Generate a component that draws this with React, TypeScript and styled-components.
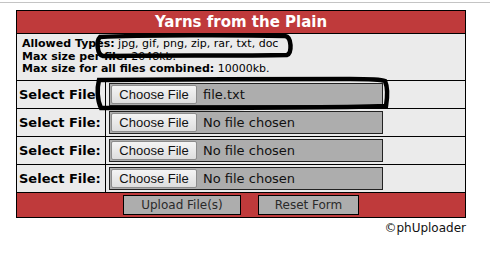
import styled, { createGlobalStyle } from 'styled-components';

const GlobalStyle = createGlobalStyle`
  body {
    margin: 0;
    background: #ffffff;
    font-family: "DejaVu Sans", Verdana, sans-serif;
  }
`;

const Page = styled.div`
  position: relative;
  width: 490px;
  height: 258px;
`;

const TopRule = styled.div`
  height: 2px;
  border-bottom: 1px solid #c4c4c4;
`;

const Frame = styled.div`
  margin: 7px 0 0 16px;
  width: 450px;
`;

const Panel = styled.div`
  box-sizing: border-box;
  width: 450px;
  border: 1px solid #000;
  background: #ebebeb;
`;

const Header = styled.div`
  height: 22px;
  background: #bf3a3b;
  border-bottom: 1px solid #000;
  color: #fff;
  font-weight: bold;
  font-size: 15px;
  line-height: 22px;
  text-align: center;
`;

const Info = styled.div`
  height: 47px;
  box-sizing: border-box;
  padding: 4px 5px 0;
  border-bottom: 1px solid #000;
  font-size: 11px;
  line-height: 12.5px;
  color: #000;
`;

const Row = styled.div`
  display: grid;
  grid-template-columns: 89px 1fr;
  height: 27px;
  border-bottom: 1px solid #000;
`;

const Label = styled.div`
  display: flex;
  align-items: center;
  padding-left: 2px;
  border-right: 1px solid #000;
  font-size: 13px;
  font-weight: bold;
  white-space: nowrap;
`;

const Cell = styled.div`
  display: flex;
  align-items: center;
  padding-left: 3px;
`;

const FileBox = styled.div`
  box-sizing: border-box;
  display: flex;
  align-items: center;
  width: 274px;
  height: 23px;
  border: 1px solid #222;
  background: #adadad;
`;

const ChooseButton = styled.span`
  box-sizing: border-box;
  display: flex;
  align-items: center;
  justify-content: center;
  width: 86px;
  height: 19px;
  margin-left: 1px;
  border: 1px solid #8c8c8c;
  border-radius: 2px;
  background: linear-gradient(#f4f4f4, #dedede);
  font-family: "Liberation Sans", Arial, sans-serif;
  font-size: 13px;
  color: #111;
`;

const FileName = styled.span`
  margin-left: 6px;
  font-size: 13px;
  color: #111;
`;

const Footer = styled.div`
  display: flex;
  justify-content: center;
  align-items: center;
  gap: 17px;
  height: 24px;
  background: #bf3a3b;
`;

const FormButton = styled.button<{ $w: number }>`
  box-sizing: border-box;
  width: ${p => p.$w}px;
  height: 20px;
  padding: 0;
  border: 1px solid #000;
  background: #adadad;
  font-family: "DejaVu Sans", Verdana, sans-serif;
  font-size: 12px;
  color: #2a2a2a;
`;

const Credit = styled.div`
  margin-top: 3px;
  text-align: right;
  font-size: 12px;
  color: #111;
`;

const Marks = styled.svg`
  position: absolute;
  top: 0;
  left: 0;
  pointer-events: none;
`;

const files = ['file.txt', 'No file chosen', 'No file chosen', 'No file chosen'];

export default function App() {
  return (
    <Page>
      <GlobalStyle />
      <TopRule />
      <Frame>
        <Panel>
          <Header>Yarns from the Plain</Header>
          <Info>
            <b>Allowed Types:</b> jpg, gif, png, zip, rar, txt, doc
            <br />
            <b>Max size per file:</b> 2048kb.
            <br />
            <b>Max size for all files combined:</b> 10000kb.
          </Info>
          {files.map((f, i) => (
            <Row key={i}>
              <Label>Select File:</Label>
              <Cell>
                <FileBox>
                  <ChooseButton>Choose File</ChooseButton>
                  <FileName>{f}</FileName>
                </FileBox>
              </Cell>
            </Row>
          ))}
          <Footer>
            <FormButton $w={118}>Upload File(s)</FormButton>
            <FormButton $w={101}>Reset Form</FormButton>
          </Footer>
        </Panel>
        <Credit>©phUploader</Credit>
      </Frame>
      <Marks width="490" height="258" viewBox="0 0 490 258">
        <path
          d="M100 37 C140 35 240 35 285 36 C292 37 292 53 287 55 C240 56 150 55 103 56 C97 55 96 41 100 37 Z"
          fill="none"
          stroke="#000"
          strokeWidth="4.5"
        />
        <path
          d="M99 80 C170 79 280 79 350 79 C370 79 380 79 385 81 C388 88 387 100 386 106 C330 108 200 108 101 108 C97 100 97 88 99 80 Z"
          fill="none"
          stroke="#000"
          strokeWidth="4.5"
        />
      </Marks>
    </Page>
  );
}
